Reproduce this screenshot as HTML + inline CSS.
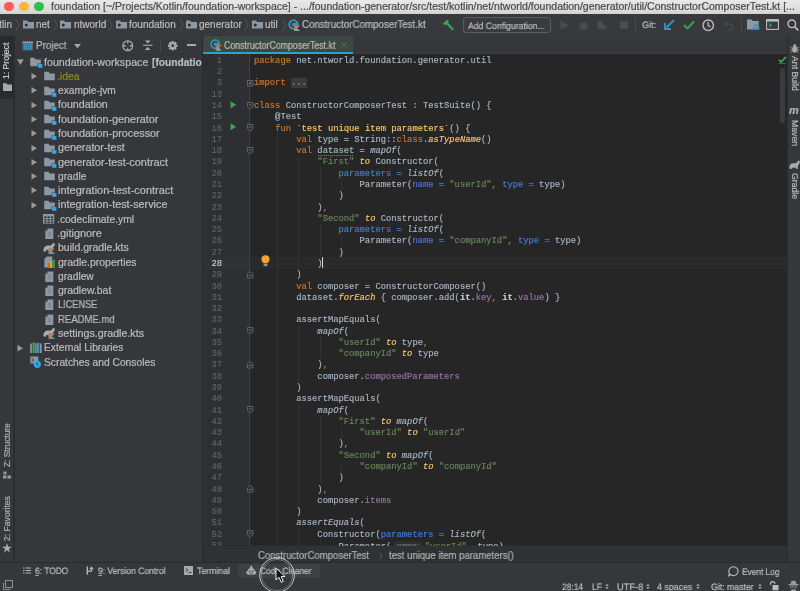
<!DOCTYPE html><html><head><meta charset="utf-8"><style>
*{margin:0;padding:0;box-sizing:border-box}
html,body{width:800px;height:591px;overflow:hidden;background:#35373a;font-family:'Liberation Sans', sans-serif}
.r{position:absolute}
.ic{position:absolute;overflow:visible}
.t{position:absolute;white-space:pre;line-height:12px;font-family:'Liberation Sans', sans-serif;will-change:transform;-webkit-text-stroke:0.22px currentColor}
.cl{will-change:transform;-webkit-text-stroke:0.15px currentColor;position:absolute;height:11.28px;line-height:11.28px;font-family:'Liberation Mono', monospace;font-size:8.8px;color:#a9b7c6;white-space:pre}
.ln{will-change:transform;-webkit-text-stroke:0.15px currentColor;position:absolute;width:30px;text-align:right;height:11.28px;line-height:11.28px;font-family:'Liberation Mono', monospace;font-size:8.8px;color:#606366;white-space:pre}
.k{color:#cc7832} .s{color:#6a8759} .f{color:#ffc66d} .fi{color:#ffc66d;font-style:italic} .it{font-style:italic} .ki{color:#ffc66d;font-style:italic}
.na{color:#467cda} .pr{color:#9876aa} .bo{font-weight:bold;color:#c9d2da} .gf{background:#3a3b3e;color:#a0a0a0;border-radius:1px}
.hint{display:inline-block;font-family:'Liberation Sans', sans-serif;font-size:8px;color:#76787b;background:#2e2f31;border-radius:3px;width:28.8px;text-align:center;line-height:9.5px;margin:0 2.2px 0 2.4px;vertical-align:0.5px}
</style></head><body><div class="r" style="left:0px;top:0px;width:800px;height:591px;background:#35373a;"></div>
<div class="r" style="left:0px;top:0px;width:800px;height:14px;background:linear-gradient(#e9e9e9,#dcdcdc 70%,#d2d2d2);"></div>
<div class="r" style="left:0px;top:13.5px;width:800px;height:0.5px;background:#a8a8a8;"></div>
<div class="r" style="left:4.2px;top:1.5px;width:9.6px;height:9.6px;border-radius:50%;background:#fc5b57"></div>
<div class="r" style="left:19.2px;top:1.5px;width:9.6px;height:9.6px;border-radius:50%;background:#fbb73a"></div>
<div class="r" style="left:34.2px;top:1.5px;width:9.6px;height:9.6px;border-radius:50%;background:#2fc04a"></div>
<div class="t" style="left:50.86px;top:1px;font-size:10.3px;color:#4b4b4b;font-weight:normal;font-family:'Liberation Sans', sans-serif;transform:scaleX(1.0205);transform-origin:0 0;">foundation [~/Projects/Kotlin/foundation-workspace] - .../foundation-generator/src/test/kotlin/net/ntworld/foundation/generator/util/ConstructorComposerTest.kt [...</div>
<div class="r" style="left:0px;top:14px;width:800px;height:21px;background:#37393c;"></div>
<div class="r" style="left:0px;top:34.5px;width:203px;height:1px;background:#2b2c2f;"></div>
<div class="r" style="left:203px;top:34.8px;width:597px;height:1px;background:#3d3f42;"></div>
<div class="r" style="left:0px;top:35px;width:13px;height:527px;background:#35373a;"></div>
<div class="r" style="left:0px;top:36px;width:13px;height:63px;background:#2a2b2e;"></div>
<div class="r" style="left:13px;top:35px;width:1.5px;height:527px;background:#2b2c2f;"></div>
<div class="r" style="left:14.5px;top:35px;width:187.5px;height:527px;background:#35373a;"></div>
<div class="r" style="left:14.5px;top:54px;width:187.5px;height:1px;background:#303235;"></div>
<div class="r" style="left:202px;top:35px;width:1px;height:527px;background:#2a2b2d;"></div>
<div class="r" style="left:203px;top:35px;width:584px;height:19px;background:#35373a;"></div>
<div class="r" style="left:203px;top:36px;width:149.5px;height:18px;background:#3c4842;"></div>
<div class="r" style="left:203px;top:51.8px;width:149.5px;height:2.5px;background:#2aa3d2;"></div>
<div class="r" style="left:352.5px;top:52.8px;width:434.5px;height:1px;background:#3b3d40;"></div>
<div class="r" style="left:203px;top:54px;width:47px;height:492px;background:#2e2f32;"></div>
<div class="r" style="left:250px;top:54px;width:537px;height:492px;background:#262627;"></div>
<div class="r" style="left:250px;top:257.4px;width:537px;height:11.4px;background:#2a2a2b;"></div>
<div class="r" style="left:203px;top:257.4px;width:47px;height:11.4px;background:#313235;"></div>
<div class="r" style="left:787px;top:35px;width:13px;height:527px;background:#35373a;"></div>
<div class="r" style="left:786.5px;top:35px;width:1px;height:527px;background:#2b2c2f;"></div>
<div class="r" style="left:203px;top:545.5px;width:584px;height:16px;background:#303134;"></div>
<div class="r" style="left:203px;top:545px;width:584px;height:0.6px;background:#2a2b2d;"></div>
<div class="r" style="left:0px;top:561.5px;width:800px;height:1px;background:#2b2c2f;"></div>
<div class="r" style="left:0px;top:562.5px;width:800px;height:15.5px;background:#35373a;"></div>
<div class="r" style="left:237.5px;top:563.5px;width:82px;height:14px;background:#3e4043;"></div>
<div class="r" style="left:0px;top:577.6px;width:800px;height:0.8px;background:#2b2c2f;"></div>
<div class="r" style="left:0px;top:578.4px;width:800px;height:12.6px;background:#35373a;"></div>
<div class="t" style="left:-12.80px;top:19px;font-size:10px;color:#bbbbbb;font-weight:normal;font-family:'Liberation Sans', sans-serif;">Kotlin</div>
<svg class="ic" style="left:14.50px;top:19.00px" width="5" height="12" viewBox="0 0 5 12"><path d="M0.8 0.5 L4.2 6 L0.8 11.5" fill="none" stroke="#55575a" stroke-width="0.9"/></svg>
<svg class="ic" style="left:22.50px;top:20.20px" width="11" height="8.5" viewBox="0 0 11 8.5"><path d="M0 0.5 h4 l1.2 1.5 h5.8 v6.5 h-11 z" fill="#8c98a4"/><circle cx="3.3" cy="5" r="1.5" fill="#2b2d30"/></svg>
<div class="t" style="left:36.00px;top:19px;font-size:10px;color:#bbbbbb;font-weight:normal;font-family:'Liberation Sans', sans-serif;">net</div>
<svg class="ic" style="left:52.50px;top:19.00px" width="5" height="12" viewBox="0 0 5 12"><path d="M0.8 0.5 L4.2 6 L0.8 11.5" fill="none" stroke="#55575a" stroke-width="0.9"/></svg>
<svg class="ic" style="left:60.00px;top:20.20px" width="11" height="8.5" viewBox="0 0 11 8.5"><path d="M0 0.5 h4 l1.2 1.5 h5.8 v6.5 h-11 z" fill="#8c98a4"/><circle cx="3.3" cy="5" r="1.5" fill="#2b2d30"/></svg>
<div class="t" style="left:74.00px;top:19px;font-size:10px;color:#bbbbbb;font-weight:normal;font-family:'Liberation Sans', sans-serif;">ntworld</div>
<svg class="ic" style="left:107.50px;top:19.00px" width="5" height="12" viewBox="0 0 5 12"><path d="M0.8 0.5 L4.2 6 L0.8 11.5" fill="none" stroke="#55575a" stroke-width="0.9"/></svg>
<svg class="ic" style="left:115.50px;top:20.20px" width="11" height="8.5" viewBox="0 0 11 8.5"><path d="M0 0.5 h4 l1.2 1.5 h5.8 v6.5 h-11 z" fill="#8c98a4"/><circle cx="3.3" cy="5" r="1.5" fill="#2b2d30"/></svg>
<div class="t" style="left:129.06px;top:19px;font-size:10px;color:#bbbbbb;font-weight:normal;font-family:'Liberation Sans', sans-serif;">foundation</div>
<svg class="ic" style="left:178.50px;top:19.00px" width="5" height="12" viewBox="0 0 5 12"><path d="M0.8 0.5 L4.2 6 L0.8 11.5" fill="none" stroke="#55575a" stroke-width="0.9"/></svg>
<svg class="ic" style="left:185.50px;top:20.20px" width="11" height="8.5" viewBox="0 0 11 8.5"><path d="M0 0.5 h4 l1.2 1.5 h5.8 v6.5 h-11 z" fill="#8c98a4"/><circle cx="3.3" cy="5" r="1.5" fill="#2b2d30"/></svg>
<div class="t" style="left:199.00px;top:19px;font-size:10px;color:#bbbbbb;font-weight:normal;font-family:'Liberation Sans', sans-serif;">generator</div>
<svg class="ic" style="left:244.00px;top:19.00px" width="5" height="12" viewBox="0 0 5 12"><path d="M0.8 0.5 L4.2 6 L0.8 11.5" fill="none" stroke="#55575a" stroke-width="0.9"/></svg>
<svg class="ic" style="left:251.50px;top:20.20px" width="11" height="8.5" viewBox="0 0 11 8.5"><path d="M0 0.5 h4 l1.2 1.5 h5.8 v6.5 h-11 z" fill="#8c98a4"/><circle cx="3.3" cy="5" r="1.5" fill="#2b2d30"/></svg>
<div class="t" style="left:265.00px;top:19px;font-size:10px;color:#bbbbbb;font-weight:normal;font-family:'Liberation Sans', sans-serif;">util</div>
<svg class="ic" style="left:282.30px;top:19.00px" width="5" height="12" viewBox="0 0 5 12"><path d="M0.8 0.5 L4.2 6 L0.8 11.5" fill="none" stroke="#55575a" stroke-width="0.9"/></svg>
<svg class="ic" style="left:288.00px;top:18.50px" width="12" height="12" viewBox="0 0 12 12"><circle cx="5.5" cy="5.5" r="5.2" fill="#3d8ea6"/><path d="M7.3 3.6 A2.6 2.6 0 1 0 7.3 7.4" fill="none" stroke="#1e3a48" stroke-width="1.3"/><path d="M6 12 L6 6.5 L12 6.5 L9 9.2 L12 12 Z" fill="#e7732d"/><path d="M6 12 L8.7 9.2 L12 12 Z" fill="#4ab8e8"/><path d="M6 9 L8.3 6.5 L6 6.5 Z" fill="#8a5fd6"/></svg>
<div class="t" style="left:302.00px;top:19px;font-size:10px;color:#bbbbbb;font-weight:normal;font-family:'Liberation Sans', sans-serif;transform:scaleX(0.9757);transform-origin:0 0;">ConstructorComposerTest.kt</div>
<svg class="ic" style="left:442.00px;top:18.50px" width="13" height="12" viewBox="0 0 13 12"><path d="M1 4.5 L5 0.8 L7.2 2.6 L6 3.8 L12 10 L10.4 11.5 L4.5 5.3 L3.3 6.5 Z" fill="#3aa655"/></svg>
<div class="r" style="left:462.5px;top:17px;width:88px;height:15.8px;border:1px solid #5a5d60;border-radius:3px;background:#393b3e"></div>
<div class="t" style="left:468.06px;top:20px;font-size:9.3px;color:#bbbbbb;font-weight:normal;font-family:'Liberation Sans', sans-serif;text-rendering:geometricPrecision;transform:scaleX(0.9331);transform-origin:0 0;">Add Configuration...</div>
<svg class="ic" style="left:560.00px;top:20.00px" width="9" height="10" viewBox="0 0 9 10"><path d="M0.5 0.5 L8.5 5 L0.5 9.5 Z" fill="#4a4c4f"/></svg>
<svg class="ic" style="left:578.00px;top:19.50px" width="11" height="11" viewBox="0 0 11 11"><ellipse cx="5.5" cy="6.2" rx="3.3" ry="4" fill="#4a4c4f"/><path d="M0.5 4 h3 M7.5 4 h3 M0.5 7 h3 M7.5 7 h3 M1 10 l2.5 -1.5 M10 10 l-2.5 -1.5" stroke="#4a4c4f" stroke-width="1"/></svg>
<svg class="ic" style="left:597.00px;top:19.50px" width="12" height="11" viewBox="0 0 12 11"><path d="M0.5 1 h5 v8 h-5 z" fill="#4a4c4f"/><path d="M5.5 4 L11 7 L5.5 10.5 Z" fill="#4a4c4f"/></svg>
<div class="r" style="left:619.5px;top:21px;width:8px;height:8px;background:#4a4c4f;"></div>
<div class="r" style="left:634.5px;top:18px;width:0.8px;height:14px;background:#48494c;"></div>
<div class="t" style="left:641.70px;top:19px;font-size:9.3px;color:#bbbbbb;font-weight:normal;font-family:'Liberation Sans', sans-serif;text-rendering:geometricPrecision;transform:scaleX(0.9759);transform-origin:0 0;">Git:</div>
<svg class="ic" style="left:664.00px;top:19.00px" width="11" height="11" viewBox="0 0 11 11"><path d="M10 1 L2.5 8.5" stroke="#3592c4" stroke-width="1.8"/><path d="M1 4 L1 10 L7 10" fill="none" stroke="#3592c4" stroke-width="1.8"/></svg>
<svg class="ic" style="left:683.00px;top:19.50px" width="12" height="10" viewBox="0 0 12 10"><path d="M1 5 L4.5 8.5 L11 1.5" fill="none" stroke="#3aa655" stroke-width="1.9"/></svg>
<svg class="ic" style="left:702.00px;top:18.80px" width="12.5" height="12.5" viewBox="0 0 12.5 12.5"><circle cx="6.25" cy="6.25" r="5.2" fill="none" stroke="#bbbbbb" stroke-width="1.4"/><path d="M6.2 3 v3.4 l2.2 1.6" fill="none" stroke="#bbbbbb" stroke-width="1.3"/></svg>
<svg class="ic" style="left:723.50px;top:19.50px" width="10" height="11" viewBox="0 0 10 11"><path d="M3 1.5 L0.8 3.8 L3 6 M1 3.8 H5.5 A3.3 3.3 0 0 1 5.5 10.4 H3" fill="none" stroke="#4a4c4f" stroke-width="1.2"/></svg>
<div class="r" style="left:740.5px;top:18px;width:0.8px;height:14px;background:#48494c;"></div>
<svg class="ic" style="left:746.50px;top:19.00px" width="13" height="11" viewBox="0 0 13 11"><path d="M0 0.5 h4.5 l1.2 1.5 h6 v8.5 h-11.7 z" fill="#8c98a4"/><rect x="7.5" y="5" width="3" height="2.2" fill="#3592c4"/><rect x="9.5" y="8" width="3" height="2.5" fill="#3592c4"/><rect x="6" y="8" width="2.5" height="2.5" fill="#3592c4"/></svg>
<svg class="ic" style="left:766.00px;top:19.00px" width="13" height="11" viewBox="0 0 13 11"><rect x="0.6" y="0.6" width="11.8" height="9.8" fill="none" stroke="#bbbbbb" stroke-width="1.1"/><rect x="0.6" y="0.6" width="11.8" height="2" fill="#bbbbbb"/><path d="M3 4.5 L5.3 6.3 L3 8.1" fill="none" stroke="#3aa655" stroke-width="1.2"/></svg>
<svg class="ic" style="left:786.50px;top:18.80px" width="12" height="12" viewBox="0 0 12 12"><circle cx="4.8" cy="4.8" r="3.8" fill="none" stroke="#bbbbbb" stroke-width="1.4"/><path d="M7.6 7.6 L11.3 11.3" stroke="#bbbbbb" stroke-width="1.7"/></svg>
<div class="t vt" style="left:2px;top:78.7px;font-size:8.6px;color:#d0d0d0;transform-origin:0 0;transform:rotate(-90deg);line-height:9px">1: Project</div>
<svg class="ic" style="left:2.50px;top:82.50px" width="9" height="8" viewBox="0 0 9 8"><path d="M0 0.3 h3.5 l1 1.3 h4.5 v6.4 h-9 z" fill="#a9a9a9"/></svg>
<div class="t vt" style="left:2.5px;top:466.7px;font-size:8.4px;color:#b0b0b0;transform-origin:0 0;transform:rotate(-90deg);line-height:9px">Z: Structure</div>
<svg class="ic" style="left:2.50px;top:471.00px" width="8" height="7.5" viewBox="0 0 8 7.5"><rect x="0.5" y="0.5" width="3" height="3" fill="#999"/><rect x="0" y="4.5" width="3.5" height="3" fill="#999"/><rect x="4.5" y="4.5" width="3.5" height="3" fill="#999"/></svg>
<div class="t vt" style="left:2.5px;top:540.8px;font-size:8.6px;color:#b0b0b0;transform-origin:0 0;transform:rotate(-90deg);line-height:9px">2: Favorites</div>
<svg class="ic" style="left:1.50px;top:543.00px" width="10" height="10" viewBox="0 0 10 10"><path d="M5 0.3 L6.2 3.7 L9.8 3.7 L6.9 5.9 L8 9.5 L5 7.3 L2 9.5 L3.1 5.9 L0.2 3.7 L3.8 3.7 Z" fill="#aaaaaa"/></svg>
<svg class="ic" style="left:21.50px;top:40.50px" width="11.5" height="10" viewBox="0 0 11.5 10"><rect x="0.5" y="0.5" width="10.5" height="9" fill="#5d6063"/><rect x="0.5" y="0.5" width="10.5" height="1.8" fill="#8c98a4"/><rect x="1.8" y="3.2" width="8" height="5.4" fill="#3592c4"/><path d="M3 4.5 h1 M5 4.5 h1 M7 4.5 h1 M3 6.8 h1 M5 6.8 h1 M7 6.8 h1" stroke="#1f4d6b" stroke-width="0.8"/></svg>
<div class="t" style="left:36.40px;top:40px;font-size:10px;color:#bbbbbb;font-weight:normal;font-family:'Liberation Sans', sans-serif;transform:scaleX(0.9825);transform-origin:0 0;">Project</div>
<svg class="ic" style="left:73.50px;top:44.00px" width="7" height="4.5" viewBox="0 0 7 4.5"><path d="M0 0 L7 0 L3.5 4.2 Z" fill="#a8a8a8"/></svg>
<svg class="ic" style="left:121.80px;top:39.80px" width="11.5" height="11.5" viewBox="0 0 11.5 11.5"><circle cx="5.75" cy="5.75" r="4.9" fill="none" stroke="#aaaaaa" stroke-width="1.25"/><path d="M5.75 1.2 v2.6 M5.75 7.7 v2.6 M1.2 5.75 h2.6 M7.7 5.75 h2.6" stroke="#aaaaaa" stroke-width="1.3"/></svg>
<svg class="ic" style="left:142.50px;top:40.00px" width="9.5" height="10.5" viewBox="0 0 9.5 10.5"><path d="M0 5.25 h9.5" stroke="#aaaaaa" stroke-width="1.1"/><path d="M2 0.5 h5.5 L4.75 3.5 Z M2 10 h5.5 L4.75 7 Z" fill="#aaaaaa"/></svg>
<div class="r" style="left:159.5px;top:39px;width:0.8px;height:13px;background:#46484b;"></div>
<svg class="ic" style="left:167.50px;top:40.50px" width="9.5" height="9.5" viewBox="0 0 9.5 9.5"><circle cx="4.75" cy="4.75" r="3.4" fill="#aaaaaa"/><rect x="3.6" y="0" width="2.3" height="2.6" rx="0.4" fill="#aaaaaa" transform="rotate(0 4.75 4.75)"/><rect x="3.6" y="0" width="2.3" height="2.6" rx="0.4" fill="#aaaaaa" transform="rotate(45 4.75 4.75)"/><rect x="3.6" y="0" width="2.3" height="2.6" rx="0.4" fill="#aaaaaa" transform="rotate(90 4.75 4.75)"/><rect x="3.6" y="0" width="2.3" height="2.6" rx="0.4" fill="#aaaaaa" transform="rotate(135 4.75 4.75)"/><rect x="3.6" y="0" width="2.3" height="2.6" rx="0.4" fill="#aaaaaa" transform="rotate(180 4.75 4.75)"/><rect x="3.6" y="0" width="2.3" height="2.6" rx="0.4" fill="#aaaaaa" transform="rotate(225 4.75 4.75)"/><rect x="3.6" y="0" width="2.3" height="2.6" rx="0.4" fill="#aaaaaa" transform="rotate(270 4.75 4.75)"/><rect x="3.6" y="0" width="2.3" height="2.6" rx="0.4" fill="#aaaaaa" transform="rotate(315 4.75 4.75)"/><circle cx="4.75" cy="4.75" r="1.4" fill="#35373a"/></svg>
<div class="r" style="left:187px;top:44.3px;width:9.3px;height:1.3px;background:#aaaaaa;"></div>
<svg class="ic" style="left:16.60px;top:59.10px" width="7" height="6.5" viewBox="0 0 7 6.5"><path d="M0 0.3 L6.8 0.3 L3.4 6 Z" fill="#9a9a9a"/></svg>
<svg class="ic" style="left:29.80px;top:57.10px" width="13" height="11" viewBox="0 0 13 11"><path d="M0.2 0.8 h4.2 l1.4 1.6 h5 v6.8 h-10.6 z" fill="#8c98a4"/><rect x="7.6" y="6.6" width="4.6" height="4" fill="#35373a"/><rect x="8.1" y="7" width="4.3" height="3.8" fill="#3aa4e8"/></svg>
<div class="t" style="left:44.06px;top:57px;font-size:10.2px;color:#bbbbbb;font-weight:normal;font-family:'Liberation Sans', sans-serif;transform:scaleX(1.0466);transform-origin:0 0;">foundation-workspace</div>
<div class="t" style="left:151.8px;top:56.53px;font-size:10.2px;color:#bbbbbb;font-weight:bold;width:50px;overflow:hidden">[foundation-workspace]</div>
<svg class="ic" style="left:31.00px;top:73.18px" width="6.5" height="6.5" viewBox="0 0 6.5 6.5"><path d="M0.5 0 L6 3.2 L0.5 6.4 Z" fill="#9a9a9a"/></svg>
<svg class="ic" style="left:43.80px;top:71.38px" width="13" height="11" viewBox="0 0 13 11"><path d="M0.2 0.8 h4.2 l1.4 1.6 h5 v6.8 h-10.6 z" fill="#8c98a4"/></svg>
<div class="t" style="left:56.70px;top:71px;font-size:10.2px;color:#8a8a2c;font-weight:normal;font-family:'Liberation Sans', sans-serif;transform:scaleX(1.0150);transform-origin:0 0;">.idea</div>
<svg class="ic" style="left:31.00px;top:87.46px" width="6.5" height="6.5" viewBox="0 0 6.5 6.5"><path d="M0.5 0 L6 3.2 L0.5 6.4 Z" fill="#9a9a9a"/></svg>
<svg class="ic" style="left:43.80px;top:85.66px" width="13" height="11" viewBox="0 0 13 11"><path d="M0.2 0.8 h4.2 l1.4 1.6 h5 v6.8 h-10.6 z" fill="#8c98a4"/><rect x="7.6" y="6.6" width="4.6" height="4" fill="#35373a"/><rect x="8.1" y="7" width="4.3" height="3.8" fill="#3aa4e8"/></svg>
<div class="t" style="left:57.50px;top:85px;font-size:10.2px;color:#bbbbbb;font-weight:normal;font-family:'Liberation Sans', sans-serif;">example-jvm</div>
<svg class="ic" style="left:31.00px;top:101.74px" width="6.5" height="6.5" viewBox="0 0 6.5 6.5"><path d="M0.5 0 L6 3.2 L0.5 6.4 Z" fill="#9a9a9a"/></svg>
<svg class="ic" style="left:43.80px;top:99.94px" width="13" height="11" viewBox="0 0 13 11"><path d="M0.2 0.8 h4.2 l1.4 1.6 h5 v6.8 h-10.6 z" fill="#8c98a4"/><rect x="7.6" y="6.6" width="4.6" height="4" fill="#35373a"/><rect x="8.1" y="7" width="4.3" height="3.8" fill="#3aa4e8"/></svg>
<div class="t" style="left:57.56px;top:99px;font-size:10.2px;color:#bbbbbb;font-weight:normal;font-family:'Liberation Sans', sans-serif;transform:scaleX(1.0466);transform-origin:0 0;">foundation</div>
<svg class="ic" style="left:31.00px;top:116.02px" width="6.5" height="6.5" viewBox="0 0 6.5 6.5"><path d="M0.5 0 L6 3.2 L0.5 6.4 Z" fill="#9a9a9a"/></svg>
<svg class="ic" style="left:43.80px;top:114.22px" width="13" height="11" viewBox="0 0 13 11"><path d="M0.2 0.8 h4.2 l1.4 1.6 h5 v6.8 h-10.6 z" fill="#8c98a4"/><rect x="7.6" y="6.6" width="4.6" height="4" fill="#35373a"/><rect x="8.1" y="7" width="4.3" height="3.8" fill="#3aa4e8"/></svg>
<div class="t" style="left:57.56px;top:114px;font-size:10.2px;color:#bbbbbb;font-weight:normal;font-family:'Liberation Sans', sans-serif;transform:scaleX(1.0610);transform-origin:0 0;">foundation-generator</div>
<svg class="ic" style="left:31.00px;top:130.30px" width="6.5" height="6.5" viewBox="0 0 6.5 6.5"><path d="M0.5 0 L6 3.2 L0.5 6.4 Z" fill="#9a9a9a"/></svg>
<svg class="ic" style="left:43.80px;top:128.50px" width="13" height="11" viewBox="0 0 13 11"><path d="M0.2 0.8 h4.2 l1.4 1.6 h5 v6.8 h-10.6 z" fill="#8c98a4"/><rect x="7.6" y="6.6" width="4.6" height="4" fill="#35373a"/><rect x="8.1" y="7" width="4.3" height="3.8" fill="#3aa4e8"/></svg>
<div class="t" style="left:57.56px;top:128px;font-size:10.2px;color:#bbbbbb;font-weight:normal;font-family:'Liberation Sans', sans-serif;transform:scaleX(1.0625);transform-origin:0 0;">foundation-processor</div>
<svg class="ic" style="left:31.00px;top:144.58px" width="6.5" height="6.5" viewBox="0 0 6.5 6.5"><path d="M0.5 0 L6 3.2 L0.5 6.4 Z" fill="#9a9a9a"/></svg>
<svg class="ic" style="left:43.80px;top:142.78px" width="13" height="11" viewBox="0 0 13 11"><path d="M0.2 0.8 h4.2 l1.4 1.6 h5 v6.8 h-10.6 z" fill="#8c98a4"/><rect x="7.6" y="6.6" width="4.6" height="4" fill="#35373a"/><rect x="8.1" y="7" width="4.3" height="3.8" fill="#3aa4e8"/></svg>
<div class="t" style="left:57.50px;top:142px;font-size:10.2px;color:#bbbbbb;font-weight:normal;font-family:'Liberation Sans', sans-serif;transform:scaleX(1.0523);transform-origin:0 0;">generator-test</div>
<svg class="ic" style="left:31.00px;top:158.86px" width="6.5" height="6.5" viewBox="0 0 6.5 6.5"><path d="M0.5 0 L6 3.2 L0.5 6.4 Z" fill="#9a9a9a"/></svg>
<svg class="ic" style="left:43.80px;top:157.06px" width="13" height="11" viewBox="0 0 13 11"><path d="M0.2 0.8 h4.2 l1.4 1.6 h5 v6.8 h-10.6 z" fill="#8c98a4"/><rect x="7.6" y="6.6" width="4.6" height="4" fill="#35373a"/><rect x="8.1" y="7" width="4.3" height="3.8" fill="#3aa4e8"/></svg>
<div class="t" style="left:57.50px;top:157px;font-size:10.2px;color:#bbbbbb;font-weight:normal;font-family:'Liberation Sans', sans-serif;transform:scaleX(1.0677);transform-origin:0 0;">generator-test-contract</div>
<svg class="ic" style="left:31.00px;top:173.14px" width="6.5" height="6.5" viewBox="0 0 6.5 6.5"><path d="M0.5 0 L6 3.2 L0.5 6.4 Z" fill="#9a9a9a"/></svg>
<svg class="ic" style="left:43.80px;top:171.34px" width="13" height="11" viewBox="0 0 13 11"><path d="M0.2 0.8 h4.2 l1.4 1.6 h5 v6.8 h-10.6 z" fill="#8c98a4"/></svg>
<div class="t" style="left:57.50px;top:171px;font-size:10.2px;color:#bbbbbb;font-weight:normal;font-family:'Liberation Sans', sans-serif;">gradle</div>
<svg class="ic" style="left:31.00px;top:187.42px" width="6.5" height="6.5" viewBox="0 0 6.5 6.5"><path d="M0.5 0 L6 3.2 L0.5 6.4 Z" fill="#9a9a9a"/></svg>
<svg class="ic" style="left:43.80px;top:185.62px" width="13" height="11" viewBox="0 0 13 11"><path d="M0.2 0.8 h4.2 l1.4 1.6 h5 v6.8 h-10.6 z" fill="#8c98a4"/><rect x="7.6" y="6.6" width="4.6" height="4" fill="#35373a"/><rect x="8.1" y="7" width="4.3" height="3.8" fill="#3aa4e8"/></svg>
<div class="t" style="left:57.50px;top:185px;font-size:10.2px;color:#bbbbbb;font-weight:normal;font-family:'Liberation Sans', sans-serif;transform:scaleX(1.0782);transform-origin:0 0;">integration-test-contract</div>
<svg class="ic" style="left:31.00px;top:201.70px" width="6.5" height="6.5" viewBox="0 0 6.5 6.5"><path d="M0.5 0 L6 3.2 L0.5 6.4 Z" fill="#9a9a9a"/></svg>
<svg class="ic" style="left:43.80px;top:199.90px" width="13" height="11" viewBox="0 0 13 11"><path d="M0.2 0.8 h4.2 l1.4 1.6 h5 v6.8 h-10.6 z" fill="#8c98a4"/><rect x="7.6" y="6.6" width="4.6" height="4" fill="#35373a"/><rect x="8.1" y="7" width="4.3" height="3.8" fill="#3aa4e8"/></svg>
<div class="t" style="left:57.50px;top:199px;font-size:10.2px;color:#bbbbbb;font-weight:normal;font-family:'Liberation Sans', sans-serif;transform:scaleX(1.0621);transform-origin:0 0;">integration-test-service</div>
<svg class="ic" style="left:43.20px;top:214.38px" width="11.5" height="9.8" viewBox="0 0 11.5 9.8"><rect x="0" y="0" width="11.2" height="9.6" fill="#8c98a4"/><g fill="#2b2d30"><rect x="1.3" y="2.4" width="2.2" height="1.6"/><rect x="4.6" y="2.4" width="2.2" height="1.6"/><rect x="7.9" y="2.4" width="2.2" height="1.6"/><rect x="1.3" y="5" width="2.2" height="1.4"/><rect x="4.6" y="5" width="2.2" height="1.4"/><rect x="7.9" y="5" width="2.2" height="1.4"/><rect x="1.3" y="7.4" width="2.2" height="1.4"/><rect x="4.6" y="7.4" width="2.2" height="1.4"/><rect x="7.9" y="7.4" width="2.2" height="1.4"/></g></svg>
<div class="t" style="left:56.70px;top:214px;font-size:10.2px;color:#bbbbbb;font-weight:normal;font-family:'Liberation Sans', sans-serif;transform:scaleX(1.0171);transform-origin:0 0;">.codeclimate.yml</div>
<svg class="ic" style="left:45.00px;top:227.96px" width="9" height="11.5" viewBox="0 0 9 11.5"><path d="M2.8 0.5 h5.5 v10.5 h-8 v-8 z" fill="#8c98a4"/><path d="M2.8 0.5 v2.5 h-2.5" fill="#5d6064"/><path d="M3 5 h3 M3 7 h3" stroke="#6d767e" stroke-width="0.8"/></svg>
<div class="t" style="left:56.66px;top:228px;font-size:10.2px;color:#bbbbbb;font-weight:normal;font-family:'Liberation Sans', sans-serif;transform:scaleX(1.0676);transform-origin:0 0;">.gitignore</div>
<svg class="ic" style="left:43.30px;top:241.74px" width="13" height="12" viewBox="0 0 13 12"><path d="M0.5 9.5 C0 5 3 3 6 3.5 C8 3.8 9 3 9.5 1.5 C10.5 0.3 12 1 11.8 2.5 C11.5 4.5 10 5.5 9.5 6.5 L9 9.5 L7.5 9.5 L7.3 7.8 C6 8.3 4.5 8.3 3.3 7.8 L3 9.5 Z" fill="#a3adb5"/><path d="M5.5 12 L5.5 6.5 L12 6.5 L8.8 9.3 L12 12 Z" fill="#e7732d"/><path d="M5.5 12 L8.5 9.3 L12 12 Z" fill="#3aa4e8"/><path d="M5.5 9.2 L8 6.5 L5.5 6.5 Z" fill="#3aa4e8"/></svg>
<div class="t" style="left:57.50px;top:242px;font-size:10.2px;color:#bbbbbb;font-weight:normal;font-family:'Liberation Sans', sans-serif;transform:scaleX(1.0328);transform-origin:0 0;">build.gradle.kts</div>
<svg class="ic" style="left:43.80px;top:256.02px" width="12" height="12" viewBox="0 0 12 12"><path d="M2.8 0.5 h5.5 v11 h-8 v-8.5 z" fill="#8c98a4"/><rect x="4" y="7" width="2" height="5" fill="#d0682a"/><rect x="6.3" y="5.2" width="2" height="6.8" fill="#e5a829"/><rect x="8.6" y="3.5" width="2.3" height="8.5" fill="#3a9c45"/></svg>
<div class="t" style="left:57.50px;top:257px;font-size:10.2px;color:#bbbbbb;font-weight:normal;font-family:'Liberation Sans', sans-serif;transform:scaleX(1.0269);transform-origin:0 0;">gradle.properties</div>
<svg class="ic" style="left:45.00px;top:270.80px" width="9" height="11.5" viewBox="0 0 9 11.5"><path d="M2.8 0.5 h5.5 v10.5 h-8 v-8 z" fill="#8c98a4"/><path d="M2.8 0.5 v2.5 h-2.5" fill="#5d6064"/><path d="M3 5 h3 M3 7 h3" stroke="#6d767e" stroke-width="0.8"/></svg>
<div class="t" style="left:57.50px;top:271px;font-size:10.2px;color:#bbbbbb;font-weight:normal;font-family:'Liberation Sans', sans-serif;">gradlew</div>
<svg class="ic" style="left:45.00px;top:285.08px" width="9" height="11.5" viewBox="0 0 9 11.5"><path d="M2.8 0.5 h5.5 v10.5 h-8 v-8 z" fill="#8c98a4"/><path d="M2.8 0.5 v2.5 h-2.5" fill="#5d6064"/><path d="M3 5 h3 M3 7 h3" stroke="#6d767e" stroke-width="0.8"/></svg>
<div class="t" style="left:57.50px;top:285px;font-size:10.2px;color:#bbbbbb;font-weight:normal;font-family:'Liberation Sans', sans-serif;transform:scaleX(1.0228);transform-origin:0 0;">gradlew.bat</div>
<svg class="ic" style="left:45.00px;top:299.36px" width="9" height="11.5" viewBox="0 0 9 11.5"><path d="M2.8 0.5 h5.5 v10.5 h-8 v-8 z" fill="#8c98a4"/><path d="M2.8 0.5 v2.5 h-2.5" fill="#5d6064"/><path d="M3 5 h3 M3 7 h3" stroke="#6d767e" stroke-width="0.8"/></svg>
<div class="t" style="left:57.50px;top:299px;font-size:10.2px;color:#bbbbbb;font-weight:normal;font-family:'Liberation Sans', sans-serif;transform:scaleX(0.9008);transform-origin:0 0;">LICENSE</div>
<svg class="ic" style="left:45.00px;top:313.64px" width="9" height="11.5" viewBox="0 0 9 11.5"><path d="M2.8 0.5 h5.5 v10.5 h-8 v-8 z" fill="#8c98a4"/><path d="M2.8 0.5 v2.5 h-2.5" fill="#5d6064"/><path d="M3 5 h3 M3 7 h3" stroke="#6d767e" stroke-width="0.8"/></svg>
<div class="t" style="left:57.50px;top:314px;font-size:10.2px;color:#bbbbbb;font-weight:normal;font-family:'Liberation Sans', sans-serif;transform:scaleX(0.9344);transform-origin:0 0;">README.md</div>
<svg class="ic" style="left:43.30px;top:327.42px" width="13" height="12" viewBox="0 0 13 12"><path d="M0.5 9.5 C0 5 3 3 6 3.5 C8 3.8 9 3 9.5 1.5 C10.5 0.3 12 1 11.8 2.5 C11.5 4.5 10 5.5 9.5 6.5 L9 9.5 L7.5 9.5 L7.3 7.8 C6 8.3 4.5 8.3 3.3 7.8 L3 9.5 Z" fill="#a3adb5"/><path d="M5.5 12 L5.5 6.5 L12 6.5 L8.8 9.3 L12 12 Z" fill="#e7732d"/><path d="M5.5 12 L8.5 9.3 L12 12 Z" fill="#3aa4e8"/><path d="M5.5 9.2 L8 6.5 L5.5 6.5 Z" fill="#3aa4e8"/></svg>
<div class="t" style="left:57.50px;top:328px;font-size:10.2px;color:#bbbbbb;font-weight:normal;font-family:'Liberation Sans', sans-serif;transform:scaleX(1.0473);transform-origin:0 0;">settings.gradle.kts</div>
<svg class="ic" style="left:17.00px;top:344.50px" width="6.5" height="6.5" viewBox="0 0 6.5 6.5"><path d="M0.5 0 L6 3.2 L0.5 6.4 Z" fill="#9a9a9a"/></svg>
<svg class="ic" style="left:29.80px;top:342.20px" width="12" height="11" viewBox="0 0 12 11"><rect x="0.3" y="1.5" width="1.5" height="9.5" fill="#9aa3ab"/><rect x="2.5" y="0.5" width="2.2" height="10.5" fill="#3aa655"/><rect x="5.3" y="1.2" width="1.3" height="9.8" fill="#9aa3ab"/><rect x="7" y="0.8" width="2.2" height="10.2" fill="#3592c4"/><rect x="9.8" y="1.5" width="1.8" height="9.5" fill="#8c98a4"/></svg>
<div class="t" style="left:44.00px;top:342px;font-size:10.2px;color:#bbbbbb;font-weight:normal;font-family:'Liberation Sans', sans-serif;">External Libraries</div>
<svg class="ic" style="left:29.80px;top:355.98px" width="12" height="12.5" viewBox="0 0 12 12.5"><rect x="0.3" y="0.5" width="8" height="7" fill="#8c98a4"/><path d="M1.5 2 L4 3.8 L1.5 5.6" fill="none" stroke="#3b3e41" stroke-width="0.9"/><circle cx="7.3" cy="8.3" r="3.6" fill="#2fa9e8"/><path d="M7.2 6.3 v2.3 l1.3 1" fill="none" stroke="#16425e" stroke-width="0.9"/></svg>
<div class="t" style="left:43.91px;top:357px;font-size:10.2px;color:#bbbbbb;font-weight:normal;font-family:'Liberation Sans', sans-serif;transform:scaleX(1.0076);transform-origin:0 0;">Scratches and Consoles</div>
<svg class="ic" style="left:209.50px;top:39.30px" width="11.5" height="11.5" viewBox="0 0 12 12"><circle cx="5.5" cy="5.5" r="5.2" fill="#3d8ea6"/><path d="M7.3 3.6 A2.6 2.6 0 1 0 7.3 7.4" fill="none" stroke="#1e3a48" stroke-width="1.3"/><path d="M6 12 L6 6.5 L12 6.5 L9 9.2 L12 12 Z" fill="#e7732d"/><path d="M6 12 L8.7 9.2 L12 12 Z" fill="#4ab8e8"/><path d="M6 9 L8.3 6.5 L6 6.5 Z" fill="#8a5fd6"/></svg>
<div class="t" style="left:223.70px;top:40px;font-size:10px;color:#bbbbbb;font-weight:normal;font-family:'Liberation Sans', sans-serif;transform:scaleX(0.8789);transform-origin:0 0;">ConstructorComposerTest.kt</div>
<svg class="ic" style="left:341.00px;top:42.00px" width="6" height="6" viewBox="0 0 6 6"><path d="M0.5 0.5 L5.5 5.5 M5.5 0.5 L0.5 5.5" stroke="#686a6d" stroke-width="0.9"/></svg>
<div class="r" style="left:0;top:0;width:800px;height:591px;clip-path:inset(54px 0 45.5px 0)">
<div class="ln" style="left:192px;top:55.90px;">1</div>
<div class="cl" style="left:254.0px;top:55.90px"><span class="k">package</span> net.ntworld.foundation.generator.util</div>
<div class="ln" style="left:192px;top:67.18px;">2</div>
<div class="cl" style="left:254.0px;top:67.18px"></div>
<div class="ln" style="left:192px;top:78.46px;">3</div>
<div class="cl" style="left:254.0px;top:78.46px"><span class="k">import</span> <span class="gf">...</span></div>
<div class="ln" style="left:192px;top:89.74px;">13</div>
<div class="cl" style="left:254.0px;top:89.74px"></div>
<div class="ln" style="left:192px;top:101.02px;">14</div>
<div class="cl" style="left:254.0px;top:101.02px"><span class="k">class</span> ConstructorComposerTest : TestSuite() {</div>
<div class="ln" style="left:192px;top:112.30px;">15</div>
<div class="cl" style="left:254.0px;top:112.30px">    @Test</div>
<div class="ln" style="left:192px;top:123.58px;">16</div>
<div class="cl" style="left:254.0px;top:123.58px">    <span class="k">fun</span> <span class="f">`test unique item parameters`</span>() {</div>
<div class="ln" style="left:192px;top:134.86px;">17</div>
<div class="cl" style="left:254.0px;top:134.86px">        <span class="k">val</span> type = String::<span class="k">class</span>.<span class="fi">asTypeName</span>()</div>
<div class="ln" style="left:192px;top:146.14px;">18</div>
<div class="cl" style="left:254.0px;top:146.14px">        <span class="k">val</span> <span class="wv">dataset</span> = <span class="it">mapOf</span>(</div>
<div class="ln" style="left:192px;top:157.42px;">19</div>
<div class="cl" style="left:254.0px;top:157.42px">            <span class="s">&quot;First&quot;</span> <span class="ki">to</span> Constructor(</div>
<div class="ln" style="left:192px;top:168.70px;">20</div>
<div class="cl" style="left:254.0px;top:168.70px">                <span class="na">parameters =</span> <span class="it">listOf</span>(</div>
<div class="ln" style="left:192px;top:179.98px;">21</div>
<div class="cl" style="left:254.0px;top:179.98px">                    Parameter(<span class="na">name =</span> <span class="s">&quot;userId&quot;</span><span class="k">,</span> <span class="na">type =</span> type)</div>
<div class="ln" style="left:192px;top:191.26px;">22</div>
<div class="cl" style="left:254.0px;top:191.26px">                )</div>
<div class="ln" style="left:192px;top:202.54px;">23</div>
<div class="cl" style="left:254.0px;top:202.54px">            )<span class="k">,</span></div>
<div class="ln" style="left:192px;top:213.82px;">24</div>
<div class="cl" style="left:254.0px;top:213.82px">            <span class="s">&quot;Second&quot;</span> <span class="ki">to</span> Constructor(</div>
<div class="ln" style="left:192px;top:225.10px;">25</div>
<div class="cl" style="left:254.0px;top:225.10px">                <span class="na">parameters =</span> <span class="it">listOf</span>(</div>
<div class="ln" style="left:192px;top:236.38px;">26</div>
<div class="cl" style="left:254.0px;top:236.38px">                    Parameter(<span class="na">name =</span> <span class="s">&quot;companyId&quot;</span><span class="k">,</span> <span class="na">type =</span> type)</div>
<div class="ln" style="left:192px;top:247.66px;">27</div>
<div class="cl" style="left:254.0px;top:247.66px">                )</div>
<div class="ln" style="left:192px;top:258.94px;color:#cfcfcf">28</div>
<div class="cl" style="left:254.0px;top:258.94px">            )</div>
<div class="ln" style="left:192px;top:270.22px;">29</div>
<div class="cl" style="left:254.0px;top:270.22px">        )</div>
<div class="ln" style="left:192px;top:281.50px;">30</div>
<div class="cl" style="left:254.0px;top:281.50px">        <span class="k">val</span> composer = ConstructorComposer()</div>
<div class="ln" style="left:192px;top:292.78px;">31</div>
<div class="cl" style="left:254.0px;top:292.78px">        dataset.<span class="fi">forEach</span> { composer.add(<span class="bo">it</span>.<span class="pr">key</span><span class="k">,</span> <span class="bo">it</span>.<span class="pr">value</span>) }</div>
<div class="ln" style="left:192px;top:304.06px;">32</div>
<div class="cl" style="left:254.0px;top:304.06px"></div>
<div class="ln" style="left:192px;top:315.34px;">33</div>
<div class="cl" style="left:254.0px;top:315.34px">        assertMapEquals(</div>
<div class="ln" style="left:192px;top:326.62px;">34</div>
<div class="cl" style="left:254.0px;top:326.62px">            <span class="it">mapOf</span>(</div>
<div class="ln" style="left:192px;top:337.90px;">35</div>
<div class="cl" style="left:254.0px;top:337.90px">                <span class="s">&quot;userId&quot;</span> <span class="ki">to</span> type<span class="k">,</span></div>
<div class="ln" style="left:192px;top:349.18px;">36</div>
<div class="cl" style="left:254.0px;top:349.18px">                <span class="s">&quot;companyId&quot;</span> <span class="ki">to</span> type</div>
<div class="ln" style="left:192px;top:360.46px;">37</div>
<div class="cl" style="left:254.0px;top:360.46px">            )<span class="k">,</span></div>
<div class="ln" style="left:192px;top:371.74px;">38</div>
<div class="cl" style="left:254.0px;top:371.74px">            composer.<span class="pr">composedParameters</span></div>
<div class="ln" style="left:192px;top:383.02px;">39</div>
<div class="cl" style="left:254.0px;top:383.02px">        )</div>
<div class="ln" style="left:192px;top:394.30px;">40</div>
<div class="cl" style="left:254.0px;top:394.30px">        assertMapEquals(</div>
<div class="ln" style="left:192px;top:405.58px;">41</div>
<div class="cl" style="left:254.0px;top:405.58px">            <span class="it">mapOf</span>(</div>
<div class="ln" style="left:192px;top:416.86px;">42</div>
<div class="cl" style="left:254.0px;top:416.86px">                <span class="s">&quot;First&quot;</span> <span class="ki">to</span> <span class="it">mapOf</span>(</div>
<div class="ln" style="left:192px;top:428.14px;">43</div>
<div class="cl" style="left:254.0px;top:428.14px">                    <span class="s">&quot;userId&quot;</span> <span class="ki">to</span> <span class="s">&quot;userId&quot;</span></div>
<div class="ln" style="left:192px;top:439.42px;">44</div>
<div class="cl" style="left:254.0px;top:439.42px">                )<span class="k">,</span></div>
<div class="ln" style="left:192px;top:450.70px;">45</div>
<div class="cl" style="left:254.0px;top:450.70px">                <span class="s">&quot;Second&quot;</span> <span class="ki">to</span> <span class="it">mapOf</span>(</div>
<div class="ln" style="left:192px;top:461.98px;">46</div>
<div class="cl" style="left:254.0px;top:461.98px">                    <span class="s">&quot;companyId&quot;</span> <span class="ki">to</span> <span class="s">&quot;companyId&quot;</span></div>
<div class="ln" style="left:192px;top:473.26px;">47</div>
<div class="cl" style="left:254.0px;top:473.26px">                )</div>
<div class="ln" style="left:192px;top:484.54px;">48</div>
<div class="cl" style="left:254.0px;top:484.54px">            )<span class="k">,</span></div>
<div class="ln" style="left:192px;top:495.82px;">49</div>
<div class="cl" style="left:254.0px;top:495.82px">            composer.<span class="pr">items</span></div>
<div class="ln" style="left:192px;top:507.10px;">50</div>
<div class="cl" style="left:254.0px;top:507.10px">        )</div>
<div class="ln" style="left:192px;top:518.38px;">51</div>
<div class="cl" style="left:254.0px;top:518.38px">        <span class="it">assertEquals</span>(</div>
<div class="ln" style="left:192px;top:529.66px;">52</div>
<div class="cl" style="left:254.0px;top:529.66px">            Constructor(<span class="na">parameters =</span> <span class="it">listOf</span>(</div>
<div class="ln" style="left:192px;top:540.94px;">53</div>
<div class="cl" style="left:254.0px;top:540.94px">                Parameter(<span class="hint">name:</span><span class="s">&quot;userId&quot;</span><span class="k">,</span> type)</div>
<div class="r" style="left:249.4px;top:54px;width:1px;height:492px;background:#3e4043;"></div>
<svg class="ic" style="left:246.60px;top:79.51px" width="6.5" height="6.5" viewBox="0 0 6.5 6.5"><rect x="0.5" y="0.5" width="5.5" height="5.5" fill="#2e2f32" stroke="#6a6c6f" stroke-width="0.8"/><path d="M1.6 3.25 h3.3 M3.25 1.6 v3.3" stroke="#7a7c7f" stroke-width="0.8"/></svg>
<svg class="ic" style="left:246.60px;top:101.82px" width="6.5" height="7.5" viewBox="0 0 6.5 7.5"><path d="M0.5 0.5 h5.5 v4.3 l-2.75 2.2 l-2.75 -2.2 z" fill="#2e2f32" stroke="#6a6c6f" stroke-width="0.8"/><path d="M1.8 3 h2.9" stroke="#7a7c7f" stroke-width="0.8"/></svg>
<svg class="ic" style="left:246.60px;top:124.38px" width="6.5" height="7.5" viewBox="0 0 6.5 7.5"><path d="M0.5 0.5 h5.5 v4.3 l-2.75 2.2 l-2.75 -2.2 z" fill="#2e2f32" stroke="#6a6c6f" stroke-width="0.8"/><path d="M1.8 3 h2.9" stroke="#7a7c7f" stroke-width="0.8"/></svg>
<svg class="ic" style="left:246.60px;top:146.94px" width="6.5" height="7.5" viewBox="0 0 6.5 7.5"><path d="M0.5 0.5 h5.5 v4.3 l-2.75 2.2 l-2.75 -2.2 z" fill="#2e2f32" stroke="#6a6c6f" stroke-width="0.8"/><path d="M1.8 3 h2.9" stroke="#7a7c7f" stroke-width="0.8"/></svg>
<svg class="ic" style="left:246.60px;top:327.42px" width="6.5" height="7.5" viewBox="0 0 6.5 7.5"><path d="M0.5 0.5 h5.5 v4.3 l-2.75 2.2 l-2.75 -2.2 z" fill="#2e2f32" stroke="#6a6c6f" stroke-width="0.8"/><path d="M1.8 3 h2.9" stroke="#7a7c7f" stroke-width="0.8"/></svg>
<svg class="ic" style="left:246.60px;top:406.38px" width="6.5" height="7.5" viewBox="0 0 6.5 7.5"><path d="M0.5 0.5 h5.5 v4.3 l-2.75 2.2 l-2.75 -2.2 z" fill="#2e2f32" stroke="#6a6c6f" stroke-width="0.8"/><path d="M1.8 3 h2.9" stroke="#7a7c7f" stroke-width="0.8"/></svg>
<svg class="ic" style="left:246.60px;top:530.46px" width="6.5" height="7.5" viewBox="0 0 6.5 7.5"><path d="M0.5 0.5 h5.5 v4.3 l-2.75 2.2 l-2.75 -2.2 z" fill="#2e2f32" stroke="#6a6c6f" stroke-width="0.8"/><path d="M1.8 3 h2.9" stroke="#7a7c7f" stroke-width="0.8"/></svg>
<svg class="ic" style="left:246.60px;top:270.72px" width="6.5" height="7.5" viewBox="0 0 6.5 7.5"><path d="M0.5 7 v-4.3 l2.75 -2.2 l2.75 2.2 v4.3 z" fill="#2e2f32" stroke="#6a6c6f" stroke-width="0.8"/><path d="M1.8 4.5 h2.9" stroke="#7a7c7f" stroke-width="0.8"/></svg>
<svg class="ic" style="left:246.60px;top:360.96px" width="6.5" height="7.5" viewBox="0 0 6.5 7.5"><path d="M0.5 7 v-4.3 l2.75 -2.2 l2.75 2.2 v4.3 z" fill="#2e2f32" stroke="#6a6c6f" stroke-width="0.8"/><path d="M1.8 4.5 h2.9" stroke="#7a7c7f" stroke-width="0.8"/></svg>
<svg class="ic" style="left:246.60px;top:485.04px" width="6.5" height="7.5" viewBox="0 0 6.5 7.5"><path d="M0.5 7 v-4.3 l2.75 -2.2 l2.75 2.2 v4.3 z" fill="#2e2f32" stroke="#6a6c6f" stroke-width="0.8"/><path d="M1.8 4.5 h2.9" stroke="#7a7c7f" stroke-width="0.8"/></svg>
<svg class="ic" style="left:230.00px;top:100.72px" width="6.5" height="7.5" viewBox="0 0 6.5 7.5"><path d="M0.5 0.3 L6.2 3.75 L0.5 7.2 Z" fill="#3aa655"/></svg>
<svg class="ic" style="left:230.00px;top:123.28px" width="6.5" height="7.5" viewBox="0 0 6.5 7.5"><path d="M0.5 0.3 L6.2 3.75 L0.5 7.2 Z" fill="#3aa655"/></svg>
<svg class="ic" style="left:260.50px;top:255.00px" width="9" height="12" viewBox="0 0 9 12"><circle cx="4.5" cy="4.3" r="4" fill="#f0a732"/><rect x="2.6" y="8.6" width="3.8" height="2.6" fill="#8d9399"/></svg>
<div class="r" style="left:322.2px;top:257px;width:1.3px;height:11.3px;background:#d8d8d8;"></div>
<div class="r" style="left:277.0px;top:133.36px;width:0.8px;height:412.64px;background:#313234;"></div>
<div class="r" style="left:298.0px;top:155.92px;width:0.8px;height:112.8px;background:#313234;"></div>
<div class="r" style="left:319.5px;top:167.2px;width:0.8px;height:33.84px;background:#313234;"></div>
<div class="r" style="left:340.5px;top:178.48px;width:0.8px;height:11.28px;background:#313234;"></div>
<div class="r" style="left:319.5px;top:223.6px;width:0.8px;height:33.84px;background:#313234;"></div>
<div class="r" style="left:340.5px;top:234.88px;width:0.8px;height:11.28px;background:#313234;"></div>
<div class="r" style="left:298.0px;top:325.12px;width:0.8px;height:56.4px;background:#313234;"></div>
<div class="r" style="left:319.5px;top:336.4px;width:0.8px;height:22.56px;background:#313234;"></div>
<div class="r" style="left:298.0px;top:404.08px;width:0.8px;height:101.52px;background:#313234;"></div>
<div class="r" style="left:319.5px;top:415.36px;width:0.8px;height:67.68px;background:#313234;"></div>
<div class="r" style="left:340.5px;top:426.64px;width:0.8px;height:11.28px;background:#313234;"></div>
<div class="r" style="left:340.5px;top:460.48px;width:0.8px;height:11.28px;background:#313234;"></div>
<div class="r" style="left:298.0px;top:528.16px;width:0.8px;height:17.84px;background:#313234;"></div>
<div class="r" style="left:319.5px;top:539.44px;width:0.8px;height:6.56px;background:#313234;"></div>
<div class="r" style="left:317.5px;top:154.6px;width:36.5px;height:1px;background:repeating-linear-gradient(90deg,#4e8a3a 0 1px,#2f4a2a 1px 2px)"></div>
</div>
<svg class="ic" style="left:777.50px;top:56.00px" width="9" height="9" viewBox="0 0 9 9"><path d="M0.8 3.8 L3.2 6 L8 0.8" fill="none" stroke="#3aa655" stroke-width="1.7"/><path d="M0.5 8 l1 -1 l1 1 l1 -1 l1 1 l1 -1 l1 1 l1 -1" fill="none" stroke="#3aa655" stroke-width="0.7"/></svg>
<div class="r" style="left:780.3px;top:67.6px;width:4.8px;height:55px;border-radius:2.4px;background:#3b3c3f"></div>
<svg class="ic" style="left:789.50px;top:44.00px" width="9.5" height="9" viewBox="0 0 9.5 9"><ellipse cx="4.75" cy="5.3" rx="2.6" ry="3.4" fill="#aaaaaa"/><circle cx="4.75" cy="1.6" r="1.4" fill="#aaaaaa"/><path d="M0.5 3 l2 1.5 M9 3 l-2 1.5 M0.3 6 h2 M9.2 6 h-2 M0.8 8.8 l1.8 -1.5 M8.7 8.8 l-1.8 -1.5" stroke="#aaaaaa" stroke-width="0.8"/></svg>
<div class="t" style="left:799.20px;top:56.00px;font-size:8.7px;color:#b8b8b8;transform-origin:0 0;transform:rotate(90deg);line-height:9px;will-change:auto;padding-right:2px">Ant Build</div>
<div class="t" style="left:788.5px;top:104.5px;font-size:11px;color:#b0b0b0;font-style:italic;font-weight:bold;line-height:11px;letter-spacing:-0.5px">m</div>
<div class="t" style="left:799.20px;top:119.50px;font-size:8.7px;color:#b8b8b8;transform-origin:0 0;transform:rotate(90deg);line-height:9px;will-change:auto;padding-right:2px">Maven</div>
<svg class="ic" style="left:788.50px;top:159.50px" width="11" height="9.5" viewBox="0 0 11 9.5"><path d="M0.5 8.5 C0 4.5 2.5 2.8 5 3.2 C7 3.5 8 2.8 8.5 1.2 C9.5 0 11 0.8 10.8 2.2 C10.5 4 9.3 5 9 6 L8.6 9 L7.2 9 L7 7.4 C5.8 7.9 4.5 7.9 3.3 7.4 L3 9 Z" fill="#aaaaaa"/></svg>
<div class="t" style="left:799.20px;top:172.80px;font-size:8.7px;color:#b8b8b8;transform-origin:0 0;transform:rotate(90deg);line-height:9px;will-change:auto;padding-right:2px">Gradle</div>
<div class="t" style="left:257.50px;top:550px;font-size:10px;color:#b0b0b0;font-weight:normal;font-family:'Liberation Sans', sans-serif;transform:scaleX(0.9570);transform-origin:0 0;">ConstructorComposerTest</div>
<svg class="ic" style="left:378.50px;top:552.50px" width="4" height="6" viewBox="0 0 4 6"><path d="M0.6 0.5 L3.2 3 L0.6 5.5" fill="none" stroke="#6a6c6f" stroke-width="0.8"/></svg>
<div class="t" style="left:388.81px;top:550px;font-size:10px;color:#b0b0b0;font-weight:normal;font-family:'Liberation Sans', sans-serif;transform:scaleX(0.9559);transform-origin:0 0;">test unique item parameters()</div>
<svg class="ic" style="left:23.00px;top:567.30px" width="8" height="7" viewBox="0 0 8 7"><path d="M0 1 h1.6 M0 3.5 h1.6 M0 6 h1.6 M2.6 1 h5.4 M2.6 3.5 h5.4 M2.6 6 h5.4" stroke="#b8b8b8" stroke-width="1.2"/></svg>
<div class="t" style="left:34.60px;top:565px;font-size:9.3px;color:#bbbbbb;font-weight:normal;font-family:'Liberation Sans', sans-serif;text-rendering:geometricPrecision;transform:scaleX(0.9027);transform-origin:0 0;">6: TODO</div>
<div class="r" style="left:34.8px;top:575.4px;width:4.5px;height:0.6px;background:#999;"></div>
<svg class="ic" style="left:86.00px;top:566.00px" width="9" height="9" viewBox="0 0 9 9"><path d="M1.3 0.5 v8.2" stroke="#b5b5b5" stroke-width="1.5"/><path d="M1.3 5.2 h4.2 v-3.2" fill="none" stroke="#b5b5b5" stroke-width="1.3"/><path d="M3.2 3.2 L5.5 0.3 L7.8 3.2 Z" fill="#b5b5b5"/></svg>
<div class="t" style="left:98.00px;top:565px;font-size:9.3px;color:#bbbbbb;font-weight:normal;font-family:'Liberation Sans', sans-serif;text-rendering:geometricPrecision;transform:scaleX(0.9135);transform-origin:0 0;">9: Version Control</div>
<div class="r" style="left:97.8px;top:575.4px;width:4.5px;height:0.6px;background:#999;"></div>
<svg class="ic" style="left:183.80px;top:566.00px" width="9" height="9" viewBox="0 0 9 9"><rect x="0" y="0" width="9" height="9" fill="#aaaaaa"/><path d="M1.8 2.3 L4 4 L1.8 5.7 M4.5 6.5 h3" fill="none" stroke="#35373a" stroke-width="0.9"/></svg>
<div class="t" style="left:196.65px;top:565px;font-size:9.3px;color:#bbbbbb;font-weight:normal;font-family:'Liberation Sans', sans-serif;text-rendering:geometricPrecision;transform:scaleX(0.9387);transform-origin:0 0;">Terminal</div>
<svg class="ic" style="left:246.00px;top:565.20px" width="10.5" height="10" viewBox="0 0 10.5 10"><path d="M5.2 0.5 C6.5 1.5 7 2.5 6.5 3.2 C8 3.2 8.8 4.5 8.2 5.6 C9.8 5.8 10.5 7.2 10 8.5 C9.6 9.5 8.5 9.8 5.2 9.8 C2 9.8 0.9 9.5 0.5 8.5 C0 7.2 0.7 5.8 2.3 5.6 C1.7 4.5 2.5 3.2 4 3.2 C3.8 2 4.5 1.2 5.2 0.5 Z" fill="#aaaaaa"/><circle cx="3.8" cy="6.3" r="0.8" fill="#35373a"/><circle cx="6.6" cy="6.3" r="0.8" fill="#35373a"/><path d="M3.5 8 Q5.2 9.2 6.9 8" fill="none" stroke="#35373a" stroke-width="0.7"/></svg>
<div class="t" style="left:260.00px;top:565px;font-size:9.3px;color:#bbbbbb;font-weight:normal;font-family:'Liberation Sans', sans-serif;text-rendering:geometricPrecision;transform:scaleX(0.8992);transform-origin:0 0;">Code Cleaner</div>
<svg class="ic" style="left:728.00px;top:565.50px" width="11" height="10.5" viewBox="0 0 11 10.5"><path d="M5.5 0.8 A4.6 4.4 0 1 1 2.3 8.4 L0.8 9.8 L1.2 7 A4.6 4.4 0 0 1 5.5 0.8 Z" fill="none" stroke="#bbbbbb" stroke-width="1.1"/></svg>
<div class="t" style="left:741.90px;top:566px;font-size:9.3px;color:#bbbbbb;font-weight:normal;font-family:'Liberation Sans', sans-serif;text-rendering:geometricPrecision;transform:scaleX(0.8929);transform-origin:0 0;">Event Log</div>
<svg class="ic" style="left:257.00px;top:555.00px" width="40" height="40" viewBox="0 0 40 40"><circle cx="20" cy="20" r="17.3" fill="none" stroke="#d8d8d8" stroke-width="0.9"/><circle cx="20" cy="20" r="15.6" fill="none" stroke="#9a9a9a" stroke-width="0.6"/></svg>
<svg class="ic" style="left:275.00px;top:566.50px" width="11" height="17" viewBox="0 0 11 17"><path d="M1 1 L1 13 L4 10.3 L6.2 15.3 L8.3 14.4 L6.2 9.6 L10 9.5 Z" fill="#111" stroke="#f0f0f0" stroke-width="1"/></svg>
<svg class="ic" style="left:3.00px;top:580.00px" width="10" height="10" viewBox="0 0 10 10"><rect x="2.5" y="0.5" width="7" height="7" fill="none" stroke="#999" stroke-width="0.9"/><path d="M0.5 2.5 v7 h7" fill="none" stroke="#999" stroke-width="0.9"/></svg>
<div class="t" style="left:562.10px;top:581px;font-size:9.3px;color:#bbbbbb;font-weight:normal;font-family:'Liberation Sans', sans-serif;text-rendering:geometricPrecision;transform:scaleX(0.9095);transform-origin:0 0;">28:14</div>
<div class="t" style="left:591.60px;top:581px;font-size:9.3px;color:#bbbbbb;font-weight:normal;font-family:'Liberation Sans', sans-serif;text-rendering:geometricPrecision;transform:scaleX(0.9000);transform-origin:0 0;">LF</div>
<svg class="ic" style="left:604.50px;top:582.80px" width="4" height="7" viewBox="0 0 4 7"><path d="M0.3 3 L2 0.8 L3.7 3 Z M0.3 4 L2 6.2 L3.7 4 Z" fill="#a5a5a5"/></svg>
<div class="t" style="left:616.90px;top:581px;font-size:9.3px;color:#bbbbbb;font-weight:normal;font-family:'Liberation Sans', sans-serif;text-rendering:geometricPrecision;transform:scaleX(0.9914);transform-origin:0 0;">UTF-8</div>
<svg class="ic" style="left:645.50px;top:582.80px" width="4" height="7" viewBox="0 0 4 7"><path d="M0.3 3 L2 0.8 L3.7 3 Z M0.3 4 L2 6.2 L3.7 4 Z" fill="#a5a5a5"/></svg>
<div class="t" style="left:657.16px;top:581px;font-size:9.3px;color:#bbbbbb;font-weight:normal;font-family:'Liberation Sans', sans-serif;text-rendering:geometricPrecision;transform:scaleX(0.9510);transform-origin:0 0;">4 spaces</div>
<svg class="ic" style="left:695.50px;top:582.80px" width="4" height="7" viewBox="0 0 4 7"><path d="M0.3 3 L2 0.8 L3.7 3 Z M0.3 4 L2 6.2 L3.7 4 Z" fill="#a5a5a5"/></svg>
<div class="t" style="left:710.60px;top:581px;font-size:9.3px;color:#bbbbbb;font-weight:normal;font-family:'Liberation Sans', sans-serif;text-rendering:geometricPrecision;transform:scaleX(0.9387);transform-origin:0 0;">Git: master</div>
<svg class="ic" style="left:757.50px;top:582.80px" width="4" height="7" viewBox="0 0 4 7"><path d="M0.3 3 L2 0.8 L3.7 3 Z M0.3 4 L2 6.2 L3.7 4 Z" fill="#a5a5a5"/></svg>
<svg class="ic" style="left:768.50px;top:581.00px" width="10" height="9.5" viewBox="0 0 10 9.5"><path d="M1.5 3.8 v-1 a2.2 2.2 0 0 1 4.4 0" fill="none" stroke="#bbbbbb" stroke-width="1.2"/><rect x="3.5" y="4" width="6" height="5.3" fill="#bbbbbb"/></svg>
<svg class="ic" style="left:787.50px;top:580.00px" width="11" height="11" viewBox="0 0 11 11"><path d="M2.5 4 L3.5 0.8 L7.5 0.8 L8.5 4 Z" fill="#9a9a9a"/><rect x="0.5" y="4" width="10" height="1.2" fill="#9a9a9a"/><circle cx="3.6" cy="6.6" r="1.3" fill="none" stroke="#9a9a9a" stroke-width="0.8"/><circle cx="7.4" cy="6.6" r="1.3" fill="none" stroke="#9a9a9a" stroke-width="0.8"/><path d="M2.5 11 C2.5 8.8 8.5 8.8 8.5 11 Z" fill="#9a9a9a"/></svg></body></html>
